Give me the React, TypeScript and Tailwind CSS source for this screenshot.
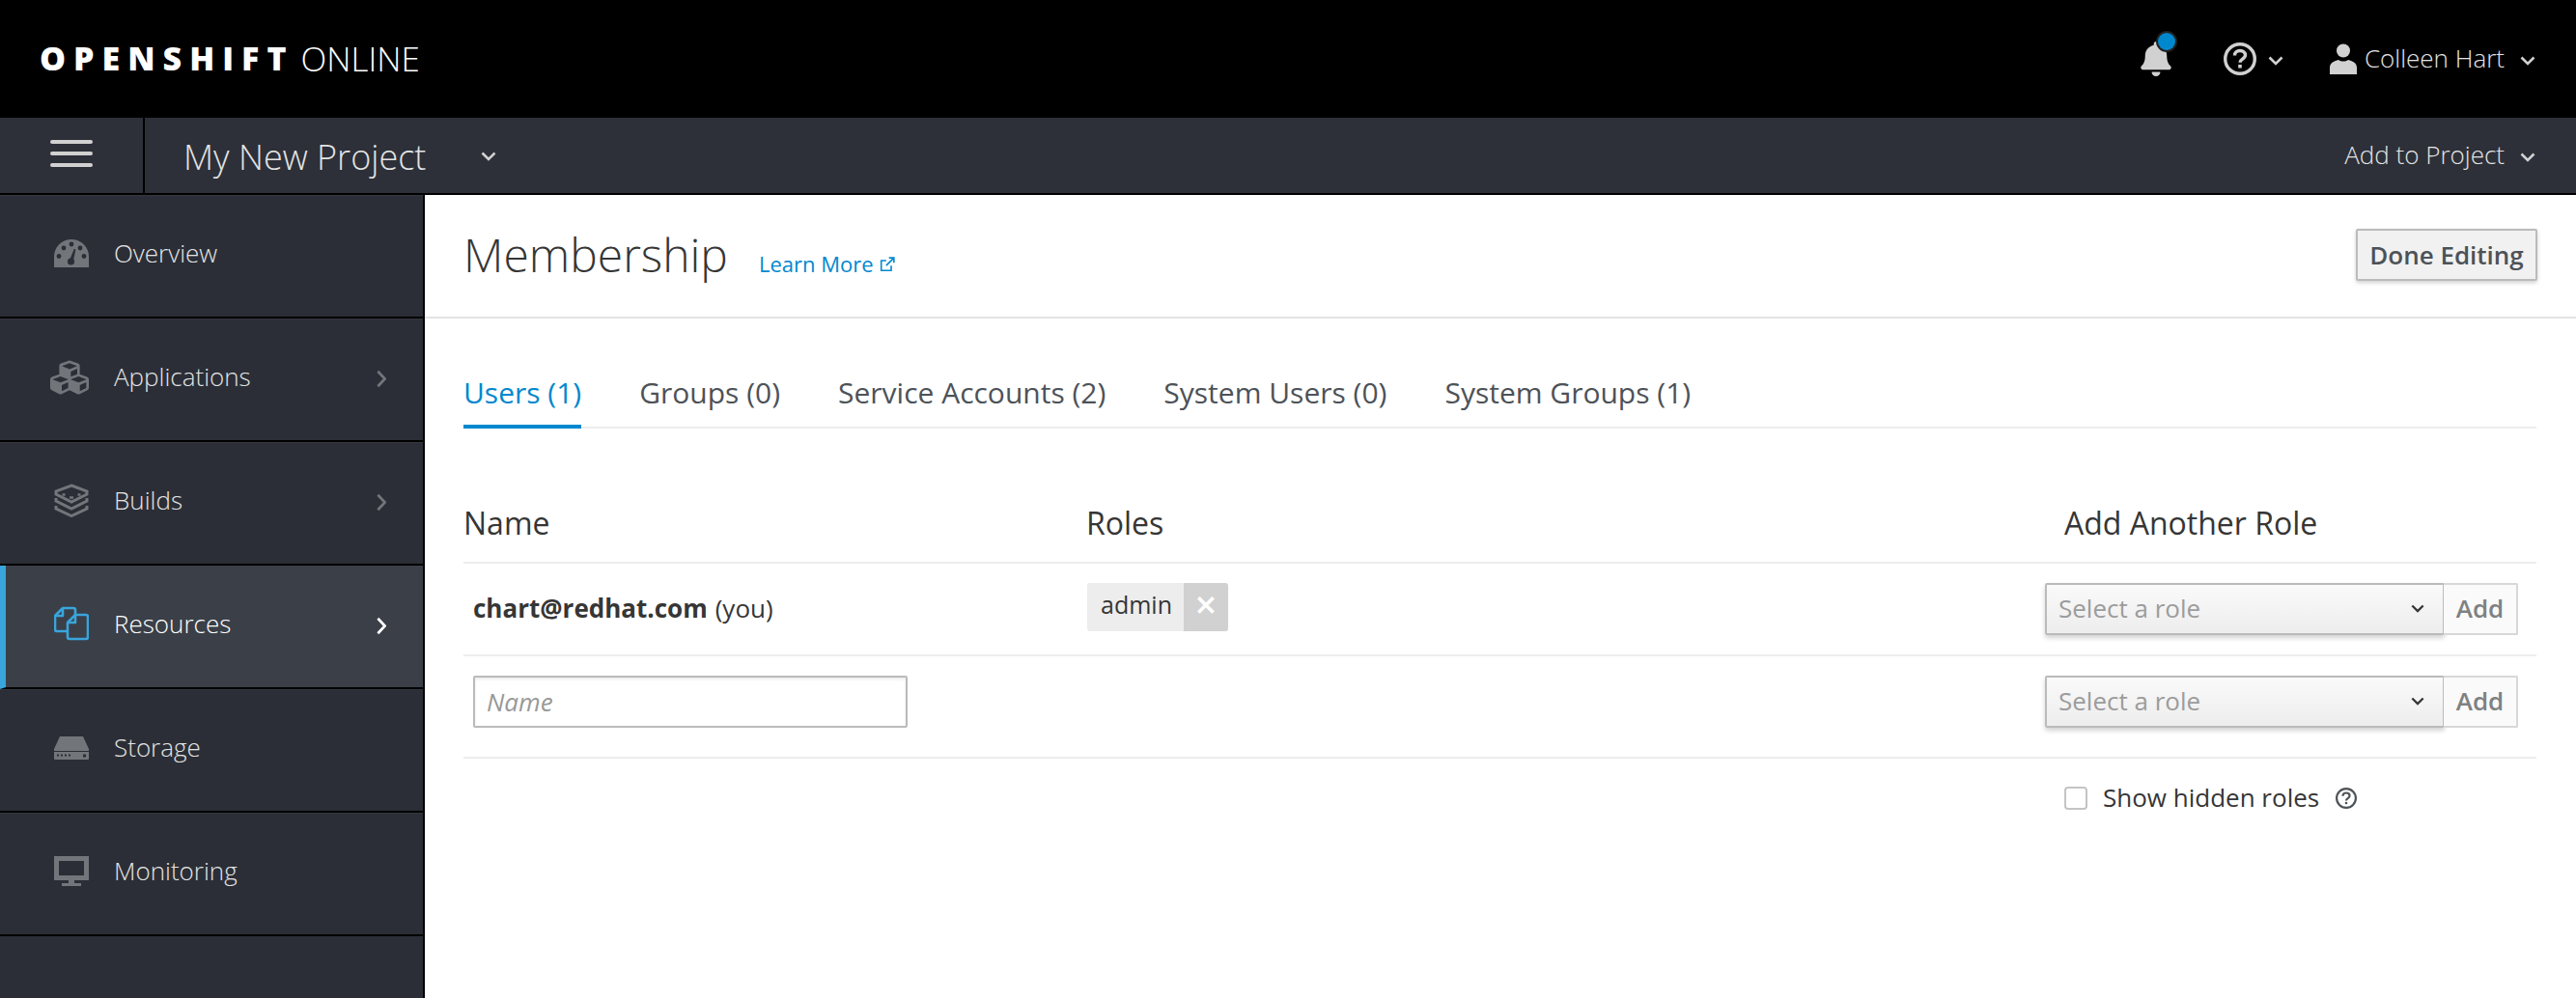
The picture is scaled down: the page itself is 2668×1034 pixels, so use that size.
import React from "react";
import { FaBell, FaCubes } from "react-icons/fa";

const Chevron = ({ className }: { className: string }) => (
  <svg viewBox="0 0 16 10" className={className} fill="none" stroke="currentColor" strokeWidth="2.6">
    <path d="M1.5 1.5 8 8l6.5-6.5" />
  </svg>
);

const RightChevron = ({ className }: { className: string }) => (
  <svg viewBox="0 0 11 20" className={className} fill="none" stroke="currentColor" strokeWidth="3">
    <path d="M1.5 1.5 9.5 10l-8 8.5" />
  </svg>
);

const HelpIcon = ({ className, width }: { className: string; width: number }) => (
  <svg viewBox="0 0 34 34" className={className} fill="none" stroke="currentColor" strokeWidth={width}>
    <circle cx="17" cy="17" r={17 - width / 2} />
    <path d="M11.5 13.5c0-3 2.4-5 5.5-5s5.5 2 5.500 4.600c0 4-5.500 4-5.500 7.600" strokeWidth="3.4" />
    <path d="M17 23v3.500" strokeWidth="3.6" />
  </svg>
);

const DashboardIcon = () => (
  <svg viewBox="0 0 36 29" className="w-9 h-[29px]" fill="currentColor">
    <path d="M0 29v-11C0 8 8 0 18 0s18 8 18 18v11Z" />
    <g fill="#2b2e36">
      <circle cx="18" cy="5" r="2.4" />
      <circle cx="10" cy="9" r="2.4" />
      <circle cx="27" cy="9" r="2.4" />
      <circle cx="5" cy="17.500" r="2.4" />
      <circle cx="31" cy="17.500" r="2.4" />
      <circle cx="17.500" cy="23" r="3.6" />
      <path d="M20.800 10 22.400 10.500 20 22l-4-.5Z" />
    </g>
  </svg>
);

const BuildsIcon = () => (
  <svg viewBox="0 0 36 35" className="w-9 h-[35px]" fill="none" stroke="currentColor" strokeWidth="3">
    <path d="M18 2 34 8v3l-16 8-16-8V8Z" />
    <path d="M2 15v3l16 8 16-8v-3" />
    <path d="M2 23v3l16 7.500 16-7.500v-3" />
    <path d="M8.500 11.500h3M16 14.500h4M24.500 11.500h3" strokeWidth="2.4" />
  </svg>
);

const ResourcesIcon = () => (
  <svg viewBox="0 0 36 36" className="w-9 h-9" fill="none" stroke="#39a5dc" strokeWidth="2.6" strokeLinejoin="round">
    <path d="M13 26H3a2 2 0 0 1-2-2V10l8-8h11a2 2 0 0 1 2 2v5" />
    <path d="M9 2v8H1" />
    <path d="M16 34a2 2 0 0 1-2-2V17l8-8h11a2 2 0 0 1 2 2v21a2 2 0 0 1-2 2Z" />
    <path d="M22 9v8h-8" />
  </svg>
);

const StorageIcon = () => (
  <svg viewBox="0 0 36 24" className="w-9 h-6" fill="currentColor">
    <path d="M6 0h24l6 13v2H0v-2Z" />
    <path d="M0 16h36v7a1 1 0 0 1-1 1H1a1 1 0 0 1-1-1Z" />
    <g fill="#2b2e36">
      <rect x="3" y="18.500" width="2" height="2" />
      <rect x="7" y="18.500" width="2" height="2" />
      <rect x="11" y="18.500" width="2" height="2" />
      <rect x="15" y="18.500" width="2" height="2" />
      <rect x="30" y="18.500" width="3" height="3" />
    </g>
  </svg>
);

const MonitorIcon = () => (
  <svg viewBox="0 0 36 31" className="w-9 h-[31px]" fill="currentColor">
    <path fillRule="evenodd" d="M0 0h36v25H0Zm5 5v15h26V5Z" />
    <path d="M15 25h6v3h-6ZM8 28h20v3H8Z" />
  </svg>
);

const navItems = [
  { label: "Overview", icon: <DashboardIcon />, arrow: false },
  { label: "Applications", icon: <FaCubes className="w-[44px] h-[40px] -ml-1" />, arrow: true },
  { label: "Builds", icon: <BuildsIcon />, arrow: true },
  { label: "Resources", icon: <ResourcesIcon />, arrow: true, active: true },
  { label: "Storage", icon: <StorageIcon />, arrow: false },
  { label: "Monitoring", icon: <MonitorIcon />, arrow: false },
];

const tabs = ["Users (1)", "Groups (0)", "Service Accounts (2)", "System Users (0)", "System Groups (1)"];

const RoleSelect = () => (
  <div className="flex">
    <div className="flex items-center justify-between w-[414px] h-[54px] pl-[12px] pr-[19px] border-2 border-[#bbbbbb] bg-gradient-to-b from-[#fafafa] to-[#ededed] shadow-[0_3px_5px_rgba(0,0,0,0.18)] rounded-[2px] text-[26px] text-[#9c9c9c]">
      <span>Select a role</span>
      <Chevron className="w-[14px] h-[9px] text-[#363636]" />
    </div>
    <button className="w-[77px] h-[54px] -ml-[1px] border-2 border-l-0 border-[#d8d8d8] bg-[#fafafa] text-[26px] font-semibold text-[#7f8183] text-center rounded-r-[2px]">
      Add
    </button>
  </div>
);

const App = () => {
  return (
    <div className="flex flex-col h-screen overflow-hidden bg-white font-['Open_Sans',sans-serif]">
      <header className="flex items-center justify-between h-[122px] shrink-0 bg-black pl-[41px] pr-[42px]">
        <div className="flex items-center gap-[15px] text-white leading-none -mt-[2px]">
          <span className="font-extrabold tracking-[8px] -mr-[8px] text-[34px]">OPENSHIFT</span>
          <span className="font-light text-[35px]">ONLINE</span>
        </div>
        <div className="flex items-center text-[#d1d1d1]">
          <div className="relative w-[32px] h-[36px] mr-[54px]">
            <FaBell className="w-[32px] h-[36px]" />
            <span className="absolute -top-[9px] left-[18px] w-[18px] h-[18px] rounded-full bg-[#0088ce] ring-2 ring-[#222]" />
          </div>
          <HelpIcon className="w-[34px] h-[34px] mr-[12px]" width={3.4} />
          <Chevron className="w-[16px] h-[10px] mt-[4px] mr-[48px]" />
          <svg viewBox="0 0 28 32" className="w-[28px] h-[32px] mr-[8px]" fill="currentColor">
            <circle cx="14" cy="7.500" r="7" />
            <path d="M0 32v-7c0-5 5-7 9-8 3 2 7 2 10 0 4 1 9 3 9 8v7Z" />
          </svg>
          <span className="text-[26px] font-light text-[#e4e4e4] leading-none mr-[16px] -mt-[2px]">Colleen Hart</span>
          <Chevron className="w-[16px] h-[10px] mt-[4px]" />
        </div>
      </header>

      <div className="flex items-center justify-between h-[80px] shrink-0 bg-[#2d3038] border-b-2 border-black text-[#d1d1d1] pr-[42px]">
        <div className="flex items-center h-full">
          <div className="flex flex-col justify-center gap-[8px] w-[150px] h-full pl-[52px] border-r-2 border-black pb-[4px]">
            <span className="block w-[44px] h-[4px] rounded-[2px] bg-[#d1d1d1]" />
            <span className="block w-[44px] h-[4px] rounded-[2px] bg-[#d1d1d1]" />
            <span className="block w-[44px] h-[4px] rounded-[2px] bg-[#d1d1d1]" />
          </div>
          <span className="ml-[40px] pt-[3px] text-[36px] font-light text-[#e4e4e4]">My New Project</span>
          <Chevron className="w-[16px] h-[10px] ml-[57px] mt-[2px]" />
        </div>
        <div className="flex items-center gap-[16px]">
          <span className="pb-[2px] text-[26px] font-light text-[#e4e4e4]">Add to Project</span>
          <Chevron className="w-[16px] h-[10px] mt-[4px]" />
        </div>
      </div>

      <div className="flex flex-1 min-h-0">
        <nav className="w-[440px] shrink-0 bg-[#2b2e36] border-r-2 border-black">
          {navItems.map((item) => (
            <div
              key={item.label}
              className={
                item.active
                  ? "flex items-center h-[128px] border-b-2 border-black bg-[#3a3f48] border-l-[6px] border-l-[#39a5dc] pl-[50px] pr-[38px] pb-[6px] text-white"
                  : "flex items-center h-[128px] border-t border-t-[#353841] border-b-2 border-black pl-[56px] pr-[38px] pb-[6px] text-[#e4e4e4]"
              }
            >
              <span className="flex items-center justify-center w-[36px] h-[40px] text-[#72767b]">{item.icon}</span>
              <span className="ml-[26px] flex-1 text-[26px] font-light">{item.label}</span>
              {item.arrow ? (
                <RightChevron className={item.active ? "w-[10px] h-[19px] mt-[4px] text-white" : "w-[10px] h-[19px] mt-[4px] text-[#72767b]"} />
              ) : null}
            </div>
          ))}
        </nav>

        <main className="flex-1 min-w-0">
          <div className="flex items-center justify-between h-[128px] border-b-2 border-[#e4e4e4] pl-[40px] pr-[40px] pb-[2px]">
            <div className="flex items-baseline">
              <h1 className="text-[48px] font-light text-[#363636]">Membership</h1>
              <a className="ml-[32px] text-[22px] text-[#0088ce] flex items-center gap-[6px]">
                Learn More
                <svg viewBox="0 0 14 14" className="w-[16px] h-[16px]" fill="none" stroke="currentColor" strokeWidth="1.4">
                  <path d="M10.500 8v4.500h-9V3.500H6M8.500 1H13v4.500M13 1 6 8" />
                </svg>
              </a>
            </div>
            <button className="w-[188px] h-[54px] border-2 border-[#bbbbbb] bg-[#f1f1f1] rounded-[2px] shadow-[0_2px_4px_rgba(0,0,0,0.18)] text-[26px] font-semibold text-[#4d5258]">
              Done Editing
            </button>
          </div>

          <div className="pl-[40px] pr-[41px]">
            <div className="flex gap-[60px] h-[114px] items-end border-b-2 border-[#ededed]">
              {tabs.map((t, i) => (
                <span
                  key={t}
                  className={
                    i === 0
                      ? "h-[60px] -mb-[2px] border-b-4 border-[#0088ce] text-[30px] text-[#0088ce]"
                      : "h-[60px] -mb-[2px] text-[30px] text-[#4d5258]"
                  }
                >
                  {t}
                </span>
              ))}
            </div>

            <div className="grid grid-cols-[645px_1fr_509px] mt-[58px]">
              <div className="h-[82px] pt-[19px] text-[32px] text-[#363636] leading-[42px] border-b-2 border-[#ededed]">Name</div>
              <div className="h-[82px] pt-[19px] text-[32px] text-[#363636] leading-[42px] border-b-2 border-[#ededed]">Roles</div>
              <div className="h-[82px] pt-[19px] pl-[20px] text-[32px] text-[#363636] leading-[42px] border-b-2 border-[#ededed]">Add Another Role</div>

              <div className="flex items-center h-[96px] pl-[10px] pb-[1px] border-b-2 border-[#ededed] text-[26px] text-[#363636]">
                <span className="font-bold">chart@redhat.com</span>
                <span className="ml-[8px]">(you)</span>
              </div>
              <div className="flex items-center h-[96px] border-b-2 border-[#ededed]">
                <div className="flex h-[50px] w-[146px] ml-[1px] -mt-[4px] rounded-[3px] bg-[#ededed]">
                  <span className="flex-1 text-[25px] leading-[44px] pl-[14px] text-[#363636]">admin</span>
                  <span className="w-[46px] rounded-r-[3px] bg-[#d1d1d1] text-center text-white text-[40px] font-semibold leading-[44px]">×</span>
                </div>
              </div>
              <div className="flex items-center h-[96px] pb-[1px] border-b-2 border-[#ededed]">
                <RoleSelect />
              </div>

              <div className="flex items-center h-[106px] pl-[10px] pb-[11px] border-b-2 border-[#ededed]">
                <input
                  placeholder="Name"
                  className="w-[450px] h-[54px] px-[12px] border-2 border-[#bbbbbb] rounded-[2px] shadow-[inset_0_2px_3px_rgba(0,0,0,0.08)] text-[26px] placeholder:italic placeholder:text-[#999999] outline-none"
                />
              </div>
              <div className="h-[106px] border-b-2 border-[#ededed]" />
              <div className="flex items-center h-[106px] pb-[11px] border-b-2 border-[#ededed]">
                <RoleSelect />
              </div>

              <div />
              <div />
              <div className="flex items-center pl-[20px] pt-[21px]">
                <input type="checkbox" className="appearance-none w-[24px] h-[24px] border-2 border-[#c4c4c4] rounded-[4px] bg-white" />
                <span className="ml-[16px] text-[26px] text-[#363636]">Show hidden roles</span>
                <HelpIcon className="w-[22px] h-[22px] ml-[17px] text-[#4d5258]" width={3.4} />
              </div>
            </div>
          </div>
        </main>
      </div>
    </div>
  );
};

export default App;
